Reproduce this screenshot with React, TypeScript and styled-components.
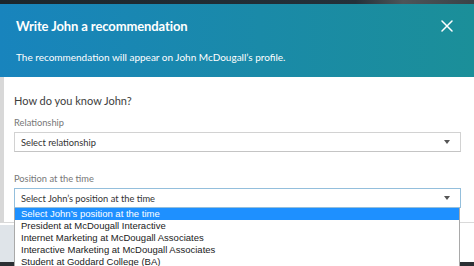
import React from "react";
import styled, { createGlobalStyle } from "styled-components";

const GlobalStyle = createGlobalStyle`
  html, body { margin: 0; padding: 0; background: #ffffff; overflow: hidden; }
  * { box-sizing: border-box; }
`;

const Page = styled.div`
  position: relative;
  width: 474px;
  height: 266px;
  overflow: hidden;
  display: flex;
  flex-direction: column;
  font-family: Lato, "Open Sans", "Liberation Sans", sans-serif;
`;

const TopStrip = styled.div`
  height: 4px;
  flex: none;
  background: linear-gradient(90deg, #1c262c 0%, #24313a 75%, #4d5559 85%, #3a4247 100%);
`;

const Header = styled.header`
  flex: none;
  height: 73px;
  background: linear-gradient(90deg, #1884bd 0%, #1a8aa8 55%, #1b8f99 100%);
  color: #ffffff;
  padding: 13px 16px 0 16px;
  display: flex;
  flex-direction: column;
`;

const TitleRow = styled.div`
  display: flex;
  align-items: center;
  justify-content: space-between;
  height: 18px;
`;

const Title = styled.h1`
  margin: 0;
  font-size: 13px;
  font-weight: 700;
  letter-spacing: -0.1px;
  line-height: 18px;
`;

const CloseButton = styled.button`
  border: none;
  background: transparent;
  padding: 0;
  margin-right: 5px;
  width: 12px;
  height: 12px;
  display: flex;
  align-items: center;
  justify-content: center;
  color: #ffffff;
  cursor: pointer;
`;

const Subtitle = styled.p`
  margin: 15px 0 0 0;
  font-size: 10px;
  line-height: 14px;
`;

const Body = styled.section`
  flex: none;
  height: 145px;
  border-left: 4px solid #d8d8d8;
  padding: 16px 13px 0 10px;
  display: flex;
  flex-direction: column;
  background: #ffffff;
`;

const Question = styled.div`
  font-size: 11px;
  line-height: 16px;
  color: #3d3d3d;
`;

const Field = styled.div<{ $gap: number }>`
  position: relative;
  margin-top: ${(p) => p.$gap}px;
  display: flex;
  flex-direction: column;
`;

const Label = styled.label`
  font-size: 9.3px;
  line-height: 13px;
  color: #777777;
  margin-bottom: 3px;
`;

const SelectBox = styled.div<{ $focused?: boolean }>`
  height: 20px;
  border: 1px solid ${(p) => (p.$focused ? "#94bfdc" : "#d2d2d2")};
  border-bottom-color: ${(p) => (p.$focused ? "#94bfdc" : "#c4c4c4")};
  display: flex;
  align-items: center;
  justify-content: space-between;
  padding: 0 10px 0 6px;
  font-size: 9.3px;
  color: #333333;
  background: #ffffff;
`;

const Caret = styled.span`
  width: 0;
  height: 0;
  border-left: 3.5px solid transparent;
  border-right: 3.5px solid transparent;
  border-top: 4px solid #555555;
`;

const DropList = styled.ul`
  position: absolute;
  top: 100%;
  left: 0;
  right: 1px;
  margin: 0;
  padding: 0;
  list-style: none;
  background: #ffffff;
  border-left: 1px solid #a9a9a9;
  border-right: 1px solid #a9a9a9;
  z-index: 5;
  font-family: "Liberation Sans", Arial, sans-serif;
  font-size: 9.5px;
`;

const Option = styled.li<{ $active?: boolean }>`
  height: 12px;
  line-height: 12px;
  padding-left: 6px;
  white-space: nowrap;
  color: ${(p) => (p.$active ? "#ffffff" : "#222222")};
  background: ${(p) => (p.$active ? "#1e90ff" : "#ffffff")};
`;

const Footer = styled.footer`
  flex: none;
  height: 40px;
  border-top: 1px solid #d9d9d9;
  display: flex;
  align-items: stretch;
  padding: 2px 0 0 0;
  background: #ffffff;
`;

const FooterButton = styled.div`
  width: 14px;
  background: #dfe4e9;
`;

const BottomStrip = styled.div`
  flex: 1;
  background: #2b2f33;
`;

const options = [
  "Select John\u2019s position at the time",
  "President at McDougall Interactive",
  "Internet Marketing at McDougall Associates",
  "Interactive Marketing at McDougall Associates",
  "Student at Goddard College (BA)",
];

export default function App() {
  return (
    <>
      <GlobalStyle />
      <Page>
        <TopStrip />
        <Header>
          <TitleRow>
            <Title>Write John a recommendation</Title>
            <CloseButton aria-label="Close">
              <svg width="12" height="12" viewBox="0 0 12 12">
                <path d="M1 1 L11 11 M11 1 L1 11" stroke="#ffffff" strokeWidth="1.5" strokeLinecap="round" />
              </svg>
            </CloseButton>
          </TitleRow>
          <Subtitle>The recommendation will appear on John McDougall’s profile.</Subtitle>
        </Header>
        <Body>
          <Question>How do you know John?</Question>
          <Field $gap={7}>
            <Label>Relationship</Label>
            <SelectBox>
              <span>Select relationship</span>
              <Caret />
            </SelectBox>
          </Field>
          <Field $gap={20}>
            <Label>Position at the time</Label>
            <SelectBox $focused>
              <span>Select John’s position at the time</span>
              <Caret />
            </SelectBox>
            <DropList>
              {options.map((o, i) => (
                <Option key={o} $active={i === 0}>
                  {o}
                </Option>
              ))}
            </DropList>
          </Field>
        </Body>
        <Footer>
          <FooterButton />
        </Footer>
        <BottomStrip />
      </Page>
    </>
  );
}
